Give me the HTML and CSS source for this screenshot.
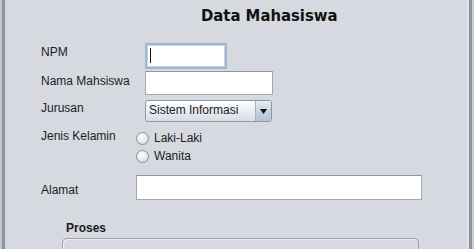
FILE: index.html
```html
<!DOCTYPE html>
<html>
<head>
  <title>Data Mahasiswa</title>
  <link rel="stylesheet" href="styles.css">
</head>
<body>
  <div class="window">
    <div class="panel">
      <h1 class="title">Data Mahasiswa</h1>

      <div class="row row-npm">
        <label class="lbl">NPM</label>
        <div class="input input-npm indent focus"><span class="caret"></span></div>
      </div>

      <div class="row row-nama">
        <label class="lbl">Nama Mahsiswa</label>
        <div class="input input-nama indent"></div>
      </div>

      <div class="row row-jurusan">
        <label class="lbl">Jurusan</label>
        <div class="combo indent">
          <span class="combo-text">Sistem Informasi</span>
          <span class="combo-btn">
            <svg width="7" height="5" viewBox="0 0 7 5"><path d="M0 0 H7 L3.5 5 Z" fill="#111"/></svg>
          </span>
        </div>
      </div>

      <div class="row row-jenis">
        <label class="lbl">Jenis Kelamin</label>
        <div class="radios">
          <div class="radio"><span class="dot"></span>Laki-Laki</div>
          <div class="radio"><span class="dot"></span>Wanita</div>
        </div>
      </div>

      <div class="row row-alamat">
        <label class="lbl lbl-alamat">Alamat</label>
        <div class="input input-alamat"></div>
      </div>

      <div class="group">
        <div class="group-title">Proses</div>
        <div class="group-box"></div>
      </div>
    </div>
  </div>
</body>
</html>
```

FILE: styles.css
```css
body {
  margin: 0;
  width: 474px;
  height: 249px;
  overflow: hidden;
  background-color: #d6d9e0;
  font-family: 'Liberation Sans', Arial, sans-serif;
  font-size: 12px;
  color: #1c1c1c;
}

.window {
  height: 249px;
  border-left: 2px solid #c3c7cf;
  border-right: 2px solid #c8ccd3;
}

.panel {
  height: 249px;
  overflow: hidden;
  border-left: 3px solid #8e939d;
  border-right: 3px solid #8e939d;
  box-shadow: inset -2px 0 0 #e1e3e8;
  background-color: #d6d9e0;
}

.title {
  margin: 0;
  height: 43px;
  padding: 6px 0 0 196px;
  box-sizing: border-box;
  font-family: 'DejaVu Sans Condensed', 'DejaVu Sans', sans-serif;
  font-stretch: condensed;
  font-size: 16.5px;
  font-weight: bold;
  line-height: 19px;
  color: #111;
}

.row {
  display: flex;
  align-items: flex-start;
  padding-left: 36px;
}

.lbl {
  width: 95px;
  flex: none;
  line-height: 14px;
}

.indent {
  margin-left: 9px;
}

.input {
  box-sizing: border-box;
  background-color: #fff;
  border: 1px solid #a3a9b3;
  border-top-color: #8f96a1;
}

.row-npm {
  height: 26px;
  margin-bottom: 2px;
}

.row-npm .lbl {
  margin-top: 2px;
}

.input-npm {
  width: 82px;
  height: 26px;
  border: 2px solid #9fb5d2;
  box-shadow: inset 0 0 0 1px #c7d5e8;
  padding: 3px 0 0 3px;
}

.caret {
  display: block;
  width: 1px;
  height: 15px;
  background-color: #111;
}

.row-nama {
  height: 24px;
  margin-bottom: 5px;
}

.row-nama .lbl {
  margin-top: 3px;
}

.input-nama {
  width: 128px;
  height: 24px;
}

.row-jurusan {
  height: 22px;
  margin-bottom: 7px;
}

.row-jurusan .lbl {
  margin-top: 1px;
}

.combo {
  box-sizing: border-box;
  width: 127px;
  height: 22px;
  display: flex;
  border: 1px solid #8d97a6;
  border-radius: 3px;
  background: linear-gradient(#ffffff, #e8ebf0 55%, #d9dde4);
}

.combo-text {
  flex: 1;
  padding-left: 3px;
  line-height: 19px;
}

.combo-btn {
  width: 15px;
  display: flex;
  align-items: center;
  justify-content: center;
  border-left: 1px solid #a5b0c0;
  border-radius: 0 2px 2px 0;
  background: linear-gradient(#e6ecf5, #c3cfe0 60%, #b5c3d7);
}

.row-jenis {
  height: 36px;
  margin-bottom: 10px;
}

.radio {
  display: flex;
  align-items: center;
  height: 18px;
  line-height: 14px;
}

.dot {
  box-sizing: border-box;
  width: 13px;
  height: 13px;
  margin-right: 5px;
  border: 1px solid #8b909a;
  border-radius: 50%;
  background: radial-gradient(circle at 40% 35%, #ffffff, #e6e8ec 55%, #c9cdd4);
}

.row-alamat {
  height: 25px;
}

.lbl-alamat {
  margin-top: 8px;
}

.input-alamat {
  width: 286px;
  height: 25px;
}

.group {
  padding: 21px 0 0 57px;
}

.group-title {
  padding-left: 4px;
  font-weight: bold;
  line-height: 15px;
  margin-bottom: 2px;
}

.group-box {
  width: 357px;
  height: 12px;
  box-sizing: border-box;
  border: 1px solid #9a9fa8;
  border-bottom: none;
  border-radius: 5px 5px 0 0;
  box-shadow: inset 1px 1px 0 #eceef2;
}
```
